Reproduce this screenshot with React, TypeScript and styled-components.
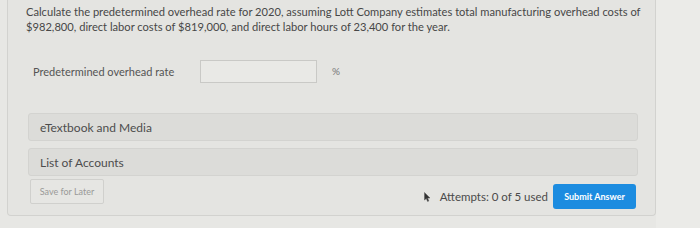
import React from "react";
import styled, { createGlobalStyle } from "styled-components";

const GlobalStyle = createGlobalStyle`
  html, body {
    margin: 0;
    padding: 0;
    background: #e7e7e4;
  }
  body {
    font-family: Lato, "Open Sans", "Liberation Sans", sans-serif;
    color: #4a4a4a;
    width: 700px;
    height: 228px;
    overflow: hidden;
  }
`;

const Page = styled.div`
  display: flex;
  height: 228px;
`;

const Panel = styled.div`
  width: 649px;
  height: 216px;
  margin-left: 7px;
  border-left: 1px solid #d2d2cf;
  border-right: 1px solid #d2d2cf;
  border-bottom: 1px solid #d2d2cf;
  border-bottom-left-radius: 4px;
  border-bottom-right-radius: 4px;
  background: #e4e4e1;
  box-sizing: border-box;
  padding: 4px 18px 0 18px;
  display: flex;
  flex-direction: column;
`;

const Side = styled.div`
  flex: 1;
  background: #ebebe8;
`;

const Question = styled.p`
  margin: 0;
  font-size: 11.15px;
  line-height: 15px;
  color: #474747;
  white-space: nowrap;
`;

const AnswerRow = styled.div`
  display: flex;
  align-items: center;
  margin-top: 25px;
  padding-left: 7px;
  height: 24px;
`;

const Label = styled.span`
  font-size: 11px;
  color: #555;
  width: 167px;
`;

const Input = styled.div`
  width: 117px;
  height: 23px;
  border: 1px solid #c9c9c6;
  background: #e9e9e6;
  box-sizing: border-box;
`;

const Unit = styled.span`
  font-size: 10px;
  color: #777;
  margin-left: 15px;
`;

const Bars = styled.div`
  display: flex;
  flex-direction: column;
  gap: 7px;
  margin-top: 30px;
  padding-left: 2px;
`;

const Bar = styled.div`
  height: 28px;
  width: 610px;
  box-sizing: border-box;
  border: 1px solid #d3d3d0;
  border-radius: 3px;
  background: #dcdcd9;
  display: flex;
  align-items: center;
  padding-left: 11px;
  font-size: 12px;
  color: #4d4d4d;
`;

const Footer = styled.div`
  display: flex;
  align-items: center;
  padding-left: 4px;
  margin-top: 3px;
`;

const SaveButton = styled.div`
  width: 74px;
  height: 25px;
  box-sizing: border-box;
  border: 1px solid #d0d0cd;
  border-radius: 2px;
  background: #e6e6e3;
  font-size: 9px;
  color: #9a9a98;
  display: flex;
  align-items: center;
  justify-content: center;
  align-self: flex-start;
`;

const Right = styled.div`
  margin-left: auto;
  margin-right: 1px;
  display: flex;
  align-items: center;
  margin-top: 5px;
`;

const Attempts = styled.span`
  font-size: 11.5px;
  color: #4a4a4a;
  margin-left: 9px;
  margin-right: 5px;
`;

const Submit = styled.div`
  width: 83px;
  height: 25px;
  border-radius: 3px;
  background: #1c8ce0;
  color: #fff;
  font-size: 9px;
  font-weight: 700;
  display: flex;
  align-items: center;
  justify-content: center;
`;

const Cursor = () => (
  <svg width="7" height="10" viewBox="0 0 7 10">
    <path d="M0.5 0.5 L0.5 8 L2.3 6.4 L3.6 9.4 L4.8 8.9 L3.6 6 L6 6 Z" fill="#333" stroke="#555" strokeWidth="0.5" />
  </svg>
);

export default function App() {
  return (
    <>
      <GlobalStyle />
      <Page>
        <Panel>
          <Question>
            Calculate the predetermined overhead rate for 2020, assuming Lott Company estimates total manufacturing overhead costs of
            <br />
            $982,800, direct labor costs of $819,000, and direct labor hours of 23,400 for the year.
          </Question>
          <AnswerRow>
            <Label>Predetermined overhead rate</Label>
            <Input />
            <Unit>%</Unit>
          </AnswerRow>
          <Bars>
            <Bar>eTextbook and Media</Bar>
            <Bar>List of Accounts</Bar>
          </Bars>
          <Footer>
            <SaveButton>Save for Later</SaveButton>
            <Right>
              <Cursor />
              <Attempts>Attempts: 0 of 5 used</Attempts>
              <Submit>Submit Answer</Submit>
            </Right>
          </Footer>
        </Panel>
        <Side />
      </Page>
    </>
  );
}
